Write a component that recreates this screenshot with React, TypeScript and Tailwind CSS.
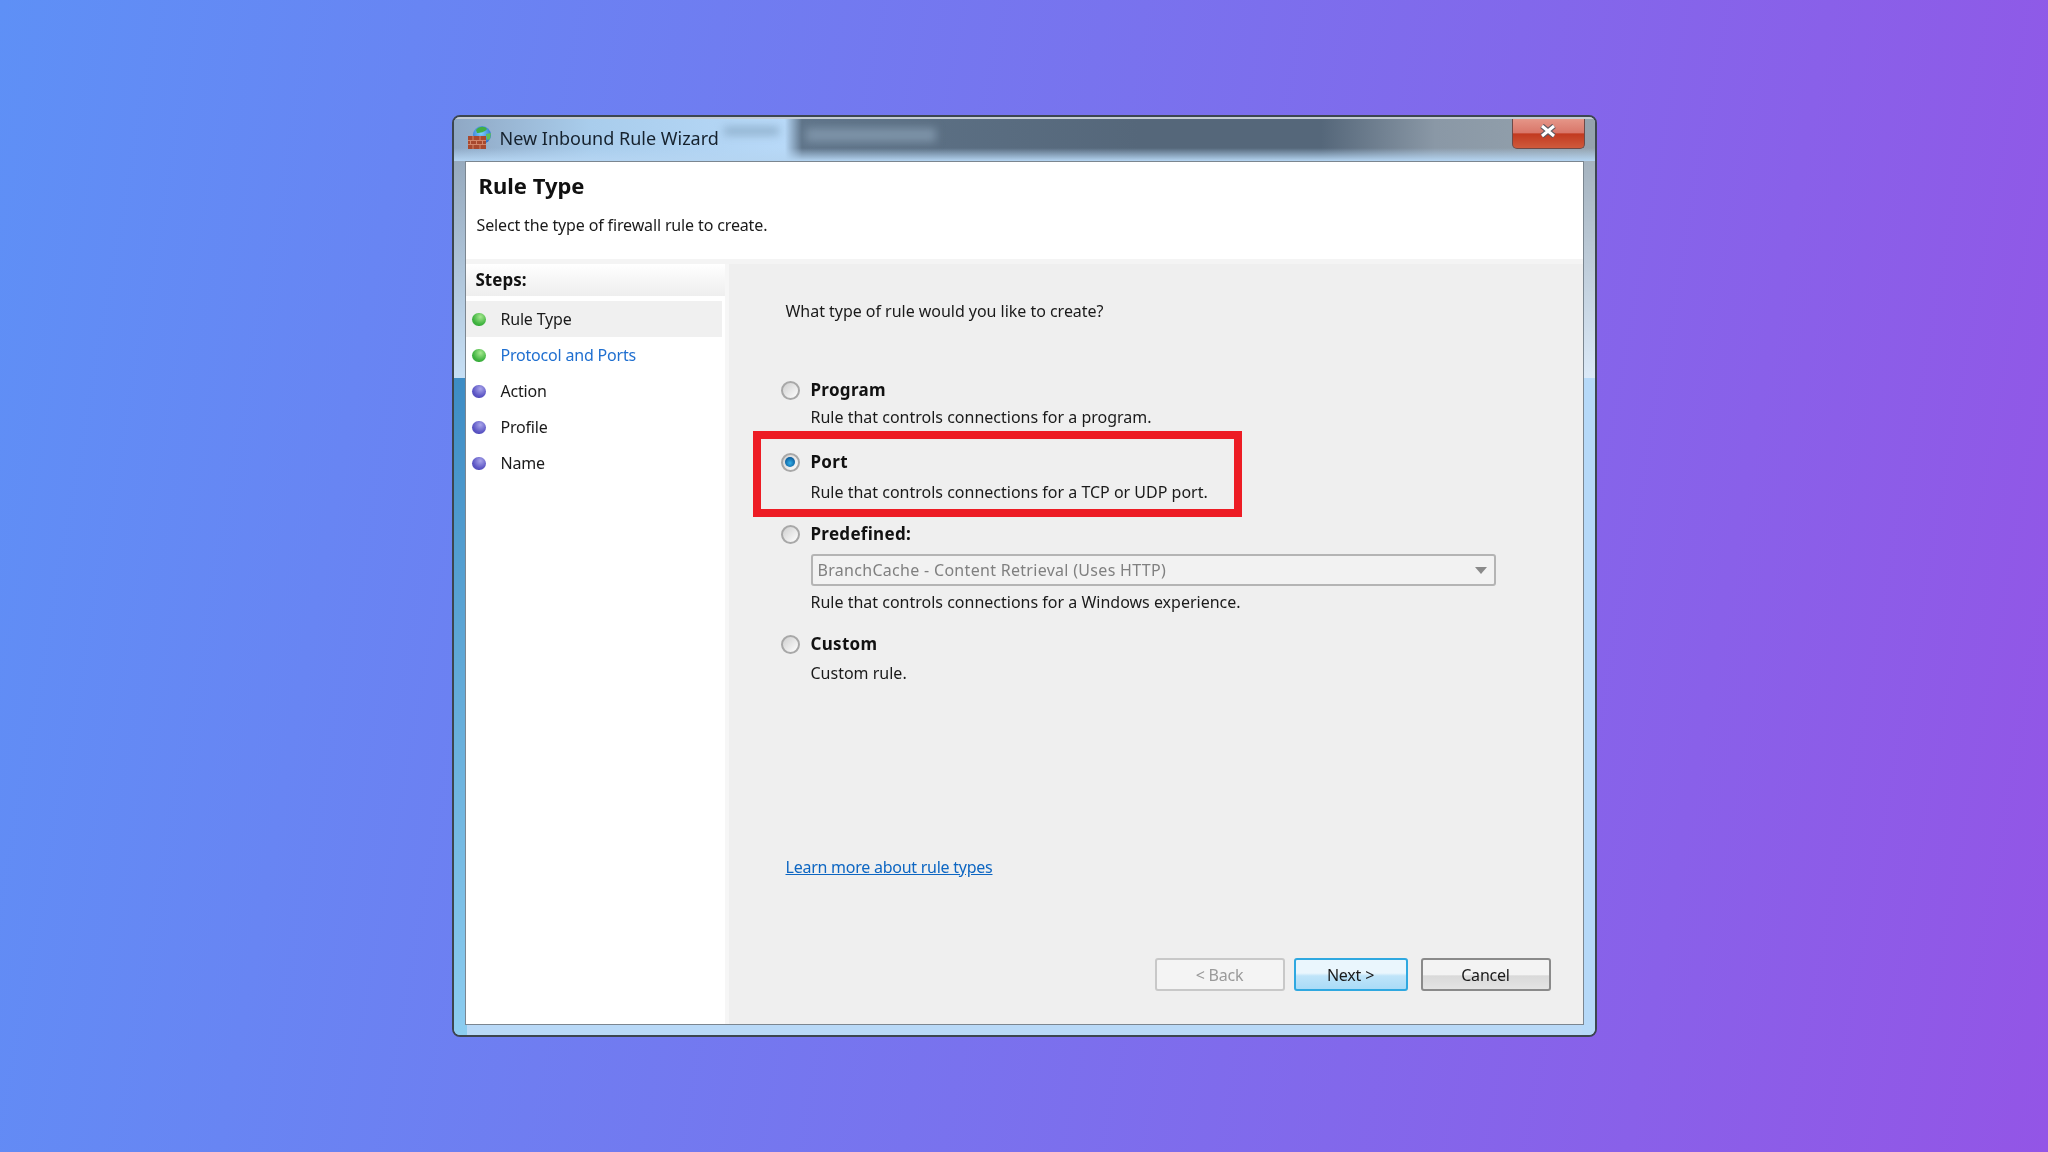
import React from 'react';

const FONT = "font-['Noto_Sans','Open_Sans',sans-serif]";

const steps = [
  { label: 'Rule Type', done: true, active: true },
  { label: 'Protocol and Ports', done: true, link: true },
  { label: 'Action' },
  { label: 'Profile' },
  { label: 'Name' },
];

const FirewallIcon = () => (
  <svg width="26" height="24" viewBox="0 0 26 24" className="shrink-0">
    <defs>
      <radialGradient id="globe" cx="0.45" cy="0.4" r="0.7">
        <stop offset="0" stopColor="#7fd0ff" />
        <stop offset="1" stopColor="#1b63c9" />
      </radialGradient>
    </defs>
    <circle cx="15" cy="9" r="9" fill="url(#globe)" />
    <path d="M9 4 C12 0 18 0 20 3 C18 6 13 7 10 7 Z" fill="#3fae45" />
    <path d="M19 8 L24 7 L23 13 L20 14 Z" fill="#5cc05a" />
    <rect x="1" y="10" width="18" height="13" fill="#a8492f" />
    <g stroke="#d3866a" strokeWidth="1" fill="none">
      <path d="M1 14.5 H19 M1 18.5 H19" />
      <path d="M6 10 V14.5 M13 10 V14.5 M3.5 14.5 V18.5 M9.5 14.5 V18.5 M15.5 14.5 V18.5 M6 18.5 V23 M13 18.5 V23" />
    </g>
  </svg>
);

const Bullet = ({ done }: { done?: boolean }) => (
  <span
    className={`w-[14px] h-[13px] rounded-full shrink-0 ${
      done
        ? 'bg-[radial-gradient(circle_at_60%_30%,#a5e88f,#3fb33f_60%,#2f9f3a)]'
        : 'bg-[radial-gradient(circle_at_60%_30%,#a9a5ea,#5b55c4_60%,#4c48b0)]'
    }`}
  />
);

const Radio = ({ checked }: { checked?: boolean }) => (
  <span className="w-[19px] h-[19px] rounded-full border-2 border-[#a8a8a8] bg-[linear-gradient(135deg,#cfcfcf,#ffffff)] flex items-center justify-center shrink-0">
    {checked && (
      <span className="w-[10px] h-[10px] rounded-full bg-[radial-gradient(circle_at_50%_60%,#35b0ea,#0b5f9e_70%)]" />
    )}
  </span>
);

const Choice = ({
  label,
  desc,
  checked,
  gap,
  children,
  className,
}: {
  label: string;
  desc: string;
  checked?: boolean;
  gap: string;
  children?: React.ReactNode;
  className?: string;
}) => (
  <div className={className}>
    <div className="flex items-center h-6 gap-[11px]">
      <Radio checked={checked} />
      <span className="font-bold text-[17px] tracking-[0.3px] text-[#111]">{label}</span>
    </div>
    {children}
    <div className={`pl-[30px] h-6 flex items-center ${gap}`}>{desc}</div>
  </div>
);

export default function App() {
  return (
    <div className={`${FONT} h-screen w-full flex items-center justify-center bg-[linear-gradient(100deg,#5e90f6,#9355e6)]`}>
      <div className="w-[1145px] h-[922px] rounded-[8px] border-2 border-[#3c4650] bg-[#b9d9f7] flex flex-col overflow-hidden blur-[0.6px] relative text-[16px] leading-6 text-[#1a1a1a]">
        {/* frame glass, left and right */}
        <div className="absolute left-0 inset-y-0 w-[13px] bg-[linear-gradient(180deg,#8d9fb2_0,#c6dff5_28.4%,#3d8cc4_28.4%,#8ccdf0_100%)]" />
        <div className="absolute right-0 inset-y-0 w-[13px] bg-[linear-gradient(180deg,#9aa8b4_0,#dbe9f7_28.4%,#b6d9f8_28.4%,#b6d9f8_100%)]" />

        {/* title bar */}
        <div className="h-[44px] flex items-center relative shrink-0 overflow-hidden border-t-2 border-[#c4ccd4] bg-[linear-gradient(90deg,#8fa8c4,#a9cdec_12%,#b8d9f8_29%,#5f7489_30.5%,#55677a_60%,#55677a_76%,#8a98a6_86%,#95a3ae)]">
          <div className="absolute left-[270px] top-[8px] w-[55px] h-[8px] bg-[#8fb0cc] blur-[4px]" />
          <div className="absolute left-[352px] top-[9px] w-[130px] h-[14px] bg-[#7d93a8] blur-[4px]" />
          <div className="absolute inset-x-0 bottom-0 h-[13px] bg-[linear-gradient(180deg,transparent,#b5d5f2)]" />
          <div className="relative -mt-[4px] flex items-center gap-[7px] pl-[13px] text-[18px] text-[#16222e]">
            <FirewallIcon />
            <span>New Inbound Rule Wizard</span>
          </div>
          <div className="absolute right-[10px] -top-[2px] w-[73px] h-[32px] rounded-b-[5px] border border-t-0 border-[#6e4a48] bg-[linear-gradient(180deg,#e79a8c,#d9776a_50%,#c23a20_55%,#cf5a3c)] flex items-center justify-center pb-[4px]">
            <svg width="18" height="14" viewBox="0 0 18 14">
              <path d="M3 2 L15 12 M15 2 L3 12" stroke="#5a5a62" strokeWidth="5.5" />
              <path d="M3 2 L15 12 M15 2 L3 12" stroke="#fff" strokeWidth="3" />
            </svg>
          </div>
        </div>

        {/* client area */}
        <div className="flex-1 mx-[11px] mb-[10px] border border-[#7b8690] bg-white flex flex-col min-h-0 relative">
          <div className="h-[97px] shrink-0 pl-[11px] relative">
            <h1 className="text-[22px] font-bold text-[#111] pl-[2px] pt-[9px] leading-7">Rule Type</h1>
            <p className="mt-[14px] tracking-[-0.14px]">Select the type of firewall rule to create.</p>
          </div>
          <div className="flex-1 flex border-t-[5px] border-[#f4f4f4] min-h-0">
            {/* steps */}
            <div className="w-[259px] shrink-0 bg-white">
              <div className="h-[32px] flex items-center pl-[10px] font-bold text-[17px] text-[#111] bg-[linear-gradient(180deg,#ffffff,#eeeeee)]">Steps:</div>
              <div className="mt-[5px] tracking-[-0.2px]">
                {steps.map(s => (
                  <div
                    key={s.label}
                    className={`h-[36px] flex items-center gap-[15px] pl-[6px] mr-[3px] ${s.active ? 'bg-[#f0f0f0]' : ''} ${s.link ? 'text-[#1f6fd0]' : ''}`}
                  >
                    <Bullet done={s.done} />
                    <span>{s.label}</span>
                  </div>
                ))}
              </div>
            </div>
            <div className="w-[4px] bg-[#f6f6f6] shrink-0" />
            {/* main panel */}
            <div className="flex-1 bg-[#efefef] pl-[57px] pr-[32px] pt-[35px] flex flex-col relative">
              <p className="tracking-[-0.03px]">What type of rule would you like to create?</p>
              <div className="mt-[55px] -ml-[5px] flex flex-col">
                <Choice label="Program" desc="Rule that controls connections for a program." gap="mt-[3px]" />
                <Choice label="Port" desc="Rule that controls connections for a TCP or UDP port." checked gap="mt-[6px]" className="mt-[21px]" />
                <Choice label="Predefined:" desc="Rule that controls connections for a Windows experience." gap="mt-[4px]" className="mt-[18px]">
                  <div className="ml-[30px] mt-[8px] h-[32px] w-[685px] rounded-[3px] border-2 border-[#b4b4b4] bg-[#f2f2f2] flex items-center justify-between pl-[5px] pr-[7px] text-[#808080] tracking-[0.3px]">
                    <span>BranchCache - Content Retrieval (Uses HTTP)</span>
                    <svg width="12" height="7" viewBox="0 0 12 7"><path d="M0 0 H12 L6 7 Z" fill="#8a8a8a" /></svg>
                  </div>
                </Choice>
                <Choice label="Custom" desc="Custom rule." gap="mt-[5px]" className="mt-[18px]" />
              </div>
              <a className="mt-[170px] text-[#0d66c2] underline w-fit tracking-[-0.25px]">Learn more about rule types</a>
              <div className="mt-auto mb-[33px] flex justify-end tracking-[-0.2px]">
                <button className="w-[130px] h-[33px] rounded-[3px] border-2 border-[#c8c8c8] bg-[#f4f4f4] text-[#9a9a9a]">&lt; Back</button>
                <button className="ml-[9px] w-[114px] h-[33px] rounded-[3px] border-2 border-[#2fa8e0] bg-[linear-gradient(180deg,#eaf6fd_45%,#bfe4f9_55%,#a9dbf7)]">Next &gt;</button>
                <button className="ml-[13px] w-[130px] h-[33px] rounded-[3px] border-2 border-[#8a8a8a] bg-[linear-gradient(180deg,#f3f3f3_50%,#d9d9d9_55%,#e4e4e4)]">Cancel</button>
              </div>
              <div className="absolute left-[24px] top-[167px] w-[489px] h-[86px] border-[8px] border-[#ed1c24]" />
            </div>
          </div>
        </div>
      </div>
    </div>
  );
}
